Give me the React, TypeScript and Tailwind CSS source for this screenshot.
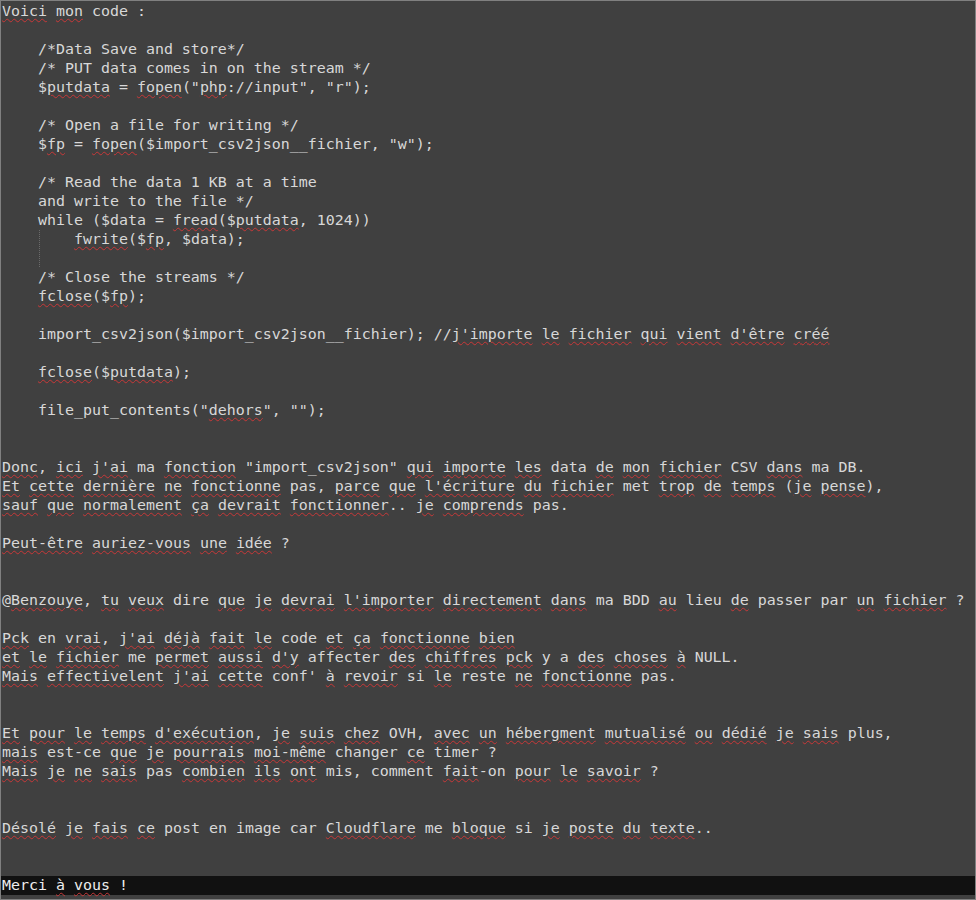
import React from "react";

const LINES: string[] = [
  "{Voici} {mon} code :",
  "",
  "    /*Data Save and store*/",
  "    /* PUT data comes in on the stream */",
  '    ${putdata} = {fopen}("{php}://input", "r");',
  "",
  "    /* Open a file for writing */",
  '    ${fp} = {fopen}($import_csv2json__fichier, "w");',
  "",
  "    /* Read the data 1 KB at a time",
  "    and write to the file */",
  "    while ($data = {fread}(${putdata}, 1024))",
  "        {fwrite}(${fp}, $data);",
  "",
  "    /* Close the streams */",
  "    {fclose}(${fp});",
  "",
  "    import_csv2json($import_csv2json__fichier); //{j'importe} {le} {fichier} {qui} {vient} {d'être} {créé}",
  "",
  "    {fclose}(${putdata});",
  "",
  '    file_put_contents("{dehors}", "");',
  "",
  "",
  '{Donc}, {ici} {j\'ai} ma {fonction} "import_csv2json" {qui} {importe} {les} data {de} {mon} {fichier} CSV {dans} ma DB.',
  "{Et} {cette} {dernière} {ne} {fonctionne} pas, {parce} {que} {l'écriture} {du} {fichier} met {trop} {de} {temps} ({je} {pense}),",
  "{sauf} {que} {normalement} {ça} {devrait} {fonctionner}.. {je} {comprends} pas.",
  "",
  "{Peut-être} {auriez-vous} {une} {idée} ?",
  "",
  "",
  "@{Benzouye}, {tu} {veux} dire {que} {je} {devrai} {l'importer} {directement} {dans} ma BDD {au} lieu {de} passer par {un} {fichier} ?",
  "",
  "{Pck} en {vrai}, {j'ai} {déjà} {fait} {le} code {et} {ça} {fonctionne} {bien}",
  "{et} {le} {fichier} me {permet} {aussi} {d'y} affecter {des} {chiffres} {pck} y a {des} {choses} {à} NULL.",
  "{Mais} {effectivelent} {j'ai} {cette} conf' {à} {revoir} si {le} reste {ne} {fonctionne} pas.",
  "",
  "",
  "{Et} {pour} {le} {temps} {d'exécution}, {je} {suis} {chez} OVH, {avec} {un} {hébergment} {mutualisé} {ou} {dédié} {je} {sais} plus,",
  "{mais} est-ce {que} {je} {pourrais} {moi-même} changer {ce} timer ?",
  "{Mais} {je} {ne} {sais} pas {combien} {ils} {ont} mis, comment {fait}-on {pour} {le} {savoir} ?",
  "",
  "",
  "{Désolé} {je} {fais} {ce} post en image car {Cloudflare} me {bloque} si {je} {poste} {du} {texte}..",
  "",
  "",
];

function renderLine(s: string) {
  const parts = s.split(/(\{[^}]*\})/g);
  return parts.map((p, i) => {
    if (p.startsWith("{") && p.endsWith("}")) {
      return (
        <span
          key={i}
          className="underline decoration-wavy decoration-[#c83838] decoration-1 underline-offset-[2px]"
        >
          {p.slice(1, -1)}
        </span>
      );
    }
    return <span key={i}>{p}</span>;
  });
}

export default function App() {
  return (
    <div
      className="w-[976px] h-[900px] bg-[#404040] border border-[#808080] text-[#d8d8d8] text-[14.95px] leading-[19px] overflow-hidden"
      style={{ fontFamily: '"DejaVu Sans Mono", "Liberation Mono", monospace' }}
    >
      <div className="relative pt-[1px]">
        <div className="absolute left-[38px] top-[229px] h-[37px] border-l border-dotted border-[#6a6a6a]" />
        {LINES.map((l, i) => (
          <div key={i} className="h-[19px] pl-[1px] whitespace-pre">
            {renderLine(l)}
          </div>
        ))}
        <div className="h-[19px] pl-[1px] whitespace-pre bg-[#111111] text-[#eeeeee]">
          {renderLine("Merci {à} {vous} !")}
        </div>
      </div>
    </div>
  );
}
